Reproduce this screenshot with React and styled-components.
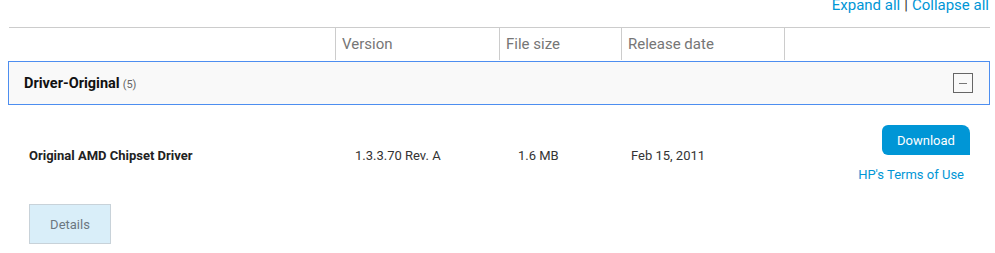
import styled, { createGlobalStyle } from "styled-components";

const GlobalStyle = createGlobalStyle`
  body {
    margin: 0;
    background: #fff;
    font-family: Roboto, "Liberation Sans", sans-serif;
    color: #333;
  }
`;

const COLUMNS = "326px 164px 122px 163px 1fr";

const Page = styled.div`
  width: 982px;
  padding: 0 5px 0 8px;
  overflow: hidden;
  height: 253px;
`;

const TopBar = styled.div`
  display: flex;
  justify-content: flex-end;
  align-items: flex-end;
  box-sizing: border-box;
  height: 27px;
  margin-top: -4px;
  padding: 0 1px 9px 0;
  font-size: 15px;
  line-height: 18px;
`;

const Link = styled.a`
  color: #0096d6;
  text-decoration: none;
  cursor: pointer;
`;

const Pipe = styled.span`
  color: #333;
  margin: 0 4px;
`;

const HeaderRow = styled.div`
  display: grid;
  grid-template-columns: ${COLUMNS};
  border-top: 1px solid #ccc;
  margin: 4px 0 0 1px;
  height: 32px;
`;

const HeaderCell = styled.div`
  display: flex;
  align-items: center;
  padding-left: 6px;
  font-size: 15px;
  color: #767676;
  border-left: ${({ $first }) => ($first ? "none" : "1px solid #ccc")};
`;

const Group = styled.div`
  display: flex;
  align-items: center;
  justify-content: space-between;
  height: 42px;
  margin-top: 1px;
  border: 1px solid #4d8ef0;
  background: #f9f9f9;
  padding: 0 16px 0 15px;
`;

const GroupTitle = styled.div`
  font-size: 14.5px;
  font-weight: 700;
  color: #111;
`;

const Count = styled.span`
  font-size: 11px;
  font-weight: 400;
  color: #666;
  margin-left: 3px;
`;

const Toggle = styled.button`
  width: 20px;
  height: 20px;
  padding: 0;
  border: 1px solid #666;
  background: transparent;
  display: flex;
  align-items: center;
  justify-content: center;
  cursor: pointer;

  &::after {
    content: "";
    width: 8px;
    height: 1px;
    background: #777;
  }
`;

const DataRow = styled.div`
  display: grid;
  grid-template-columns: ${COLUMNS};
  align-items: center;
  margin-top: 20px;
`;

const Cell = styled.div`
  padding-left: ${({ $pad }) => $pad}px;
  font-size: 13px;
  font-weight: ${({ $bold }) => ($bold ? 700 : 400)};
  color: ${({ $bold }) => ($bold ? "#222" : "#333")};
  padding-top: 4px;
`;

const Actions = styled.div`
  display: flex;
  flex-direction: column;
  align-items: flex-end;
  padding-right: 20px;
`;

const DownloadButton = styled.button`
  width: 88px;
  height: 30px;
  border: none;
  background: #0096d6;
  color: #fff;
  font-family: inherit;
  font-size: 13px;
  border-radius: 6px 8px 0 6px;
  cursor: pointer;
`;

const Terms = styled(Link)`
  font-size: 13px;
  margin-top: 12px;
  margin-right: 6px;
`;

const DetailsButton = styled.button`
  margin: 22px 0 0 21px;
  width: 82px;
  height: 40px;
  border: 1px solid #c8d2d9;
  background: #d9eef9;
  color: #6d7780;
  font-family: inherit;
  font-size: 13px;
  cursor: pointer;
`;

const HEADERS = ["", "Version", "File size", "Release date", ""];

export default function App() {
  return (
    <>
      <GlobalStyle />
      <Page>
        <TopBar>
          <Link>Expand all</Link>
          <Pipe>|</Pipe>
          <Link>Collapse all</Link>
        </TopBar>
        <HeaderRow>
          {HEADERS.map((h, i) => (
            <HeaderCell key={i} $first={i === 0}>
              {h}
            </HeaderCell>
          ))}
        </HeaderRow>
        <Group>
          <GroupTitle>
            Driver-Original<Count>(5)</Count>
          </GroupTitle>
          <Toggle aria-label="Collapse" />
        </Group>
        <DataRow>
          <Cell $pad={21} $bold>
            Original AMD Chipset Driver
          </Cell>
          <Cell $pad={21}>1.3.3.70 Rev. A</Cell>
          <Cell $pad={20}>1.6 MB</Cell>
          <Cell $pad={11}>Feb 15, 2011</Cell>
          <Actions>
            <DownloadButton>Download</DownloadButton>
            <Terms>HP's Terms of Use</Terms>
          </Actions>
        </DataRow>
        <DetailsButton>Details</DetailsButton>
      </Page>
    </>
  );
}
